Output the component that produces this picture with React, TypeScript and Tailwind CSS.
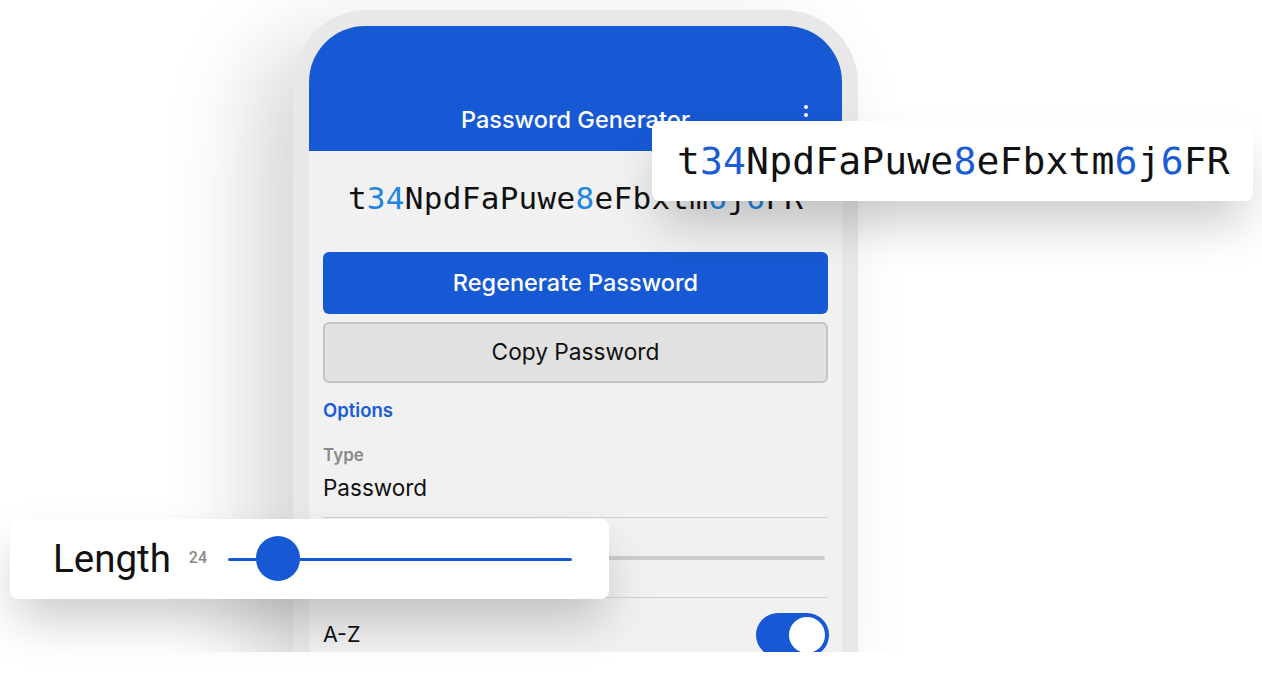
const PASSWORD = "t34NpdFaPuwe8eFbxtm6j6FR";

function Password({ digitClass }: { digitClass: string }) {
  return (
    <>
      {PASSWORD.split("").map((ch, i) => (
        <span key={i} className={/[0-9]/.test(ch) ? digitClass : ""}>
          {ch}
        </span>
      ))}
    </>
  );
}

export default function App() {
  return (
    <div className="relative h-[680px] w-[1262px] overflow-hidden bg-white font-['Inter',sans-serif]">
      <div className="h-[652px] overflow-hidden pl-[293px] pt-[10px]">
        {/* phone */}
        <div className="h-[660px] w-[565px] rounded-t-[74px] bg-[#e8e8e8] px-[16px] pt-[16px] shadow-[-40px_30px_90px_rgba(0,0,0,0.16)]">
          <div className="flex h-full flex-col overflow-hidden rounded-t-[56px] bg-[#f1f1f1]">
            <header className="relative flex h-[125px] shrink-0 items-end justify-center bg-[#1759d4] pb-[17px]">
              <span className="text-[23.5px] leading-[28px] font-medium text-white">Password Generator</span>
              <div className="absolute right-[34px] bottom-[26px] flex flex-col items-center gap-[4px]">
                <span className="h-[4px] w-[4px] rounded-full bg-white" />
                <span className="h-[4px] w-[4px] rounded-full bg-white" />
                <span className="h-[4px] w-[4px] rounded-full bg-white" />
              </div>
            </header>

            <div className="flex flex-col px-[14px]">
              <div className="flex h-[101px] justify-center pt-[27px]">
                <span className="font-['DejaVu_Sans_Mono',monospace] text-[31px] leading-[40px] tracking-[0.3px] text-[#111]">
                  <Password digitClass="text-[#1e86e2]" />
                </span>
              </div>

              <button className="h-[62px] rounded-[6px] bg-[#1759d4] text-[23.5px] font-medium text-white">
                Regenerate Password
              </button>
              <button className="mt-[8px] h-[61px] rounded-[6px] border-2 border-[#c4c4c4] bg-[#e1e1e1] text-[22.7px] text-[#111]">
                Copy Password
              </button>

              <div className="mt-[15px] text-[18.5px] leading-[24px] font-semibold text-[#1a5bd6]">Options</div>

              <div className="mt-[22px] text-[17px] leading-[22px] font-semibold text-[#8a8a8a]">Type</div>
              <div className="mt-[8px] text-[22.5px] leading-[28px] text-[#111]">Password</div>

              <div className="mt-[15px] h-px bg-[#d3d3d3]" />
              <div className="flex h-[79px] items-center">
                <div className="h-[4px] w-[502px] rounded-full bg-[#cdcdcd]" />
              </div>
              <div className="h-px bg-[#d3d3d3]" />

              <div className="flex items-start justify-between pt-[15px]">
                <span className="pt-[9px] text-[21.5px] leading-[24px] text-[#111]">A-Z</span>
                <div className="mr-[-1px] flex h-[44px] w-[73px] items-center justify-end rounded-full bg-[#1759d4] pr-[1px]">
                  <span className="h-[42px] w-[42px] rounded-full border-[3px] border-[#1759d4] bg-white" />
                </div>
              </div>
            </div>
          </div>
        </div>
      </div>

      {/* password callout */}
      <div className="absolute top-[121px] left-[652px] flex h-[80px] w-[601px] items-center rounded-[8px] bg-white pl-[25px] shadow-[0_28px_50px_-8px_rgba(0,0,0,0.22)]">
        <span className="font-['DejaVu_Sans_Mono',monospace] text-[38px] leading-[44px] tracking-[0.15px] text-[#111]">
          <Password digitClass="text-[#1a5bd6]" />
        </span>
      </div>

      {/* length callout */}
      <div className="absolute top-[519px] left-[10px] flex h-[80px] w-[599px] items-center rounded-[8px] bg-white pl-[43px] shadow-[0_25px_50px_-6px_rgba(0,0,0,0.22)]">
        <span className="font-['Roboto',sans-serif] text-[38.5px] leading-[44px] text-[#111]">Length</span>
        <span className="ml-[18px] mb-[2px] font-['Roboto',sans-serif] text-[16px] font-medium text-[#8a8a8a]">24</span>
        <div className="relative ml-[21px] flex h-[46px] w-[344px] items-center">
          <div className="h-[3px] w-full rounded-full bg-[#1759d4]" />
          <span className="absolute top-0 left-[28px] h-[45px] w-[44px] rounded-full bg-[#1759d4]" />
        </div>
      </div>
    </div>
  );
}
